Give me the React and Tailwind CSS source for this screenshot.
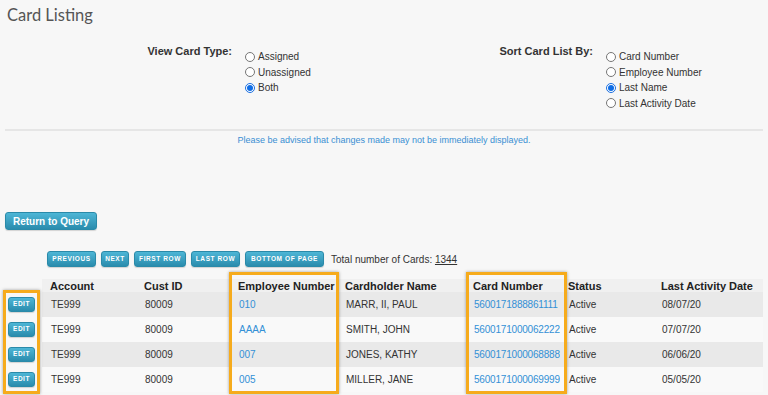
import React from "react";

const viewTypes = [
  { label: "Assigned", checked: false },
  { label: "Unassigned", checked: false },
  { label: "Both", checked: true },
];

const sortTypes = [
  { label: "Card Number", checked: false },
  { label: "Employee Number", checked: false },
  { label: "Last Name", checked: true },
  { label: "Last Activity Date", checked: false },
];

const pager = [
  { label: "PREVIOUS", w: "w-[49px]" },
  { label: "NEXT", w: "w-[28px]" },
  { label: "FIRST ROW", w: "w-[52px]" },
  { label: "LAST ROW", w: "w-[49px]" },
  { label: "BOTTOM OF PAGE", w: "w-[79px]" },
];

const cards = [
  { account: "TE999", cust: "80009", emp: "010", name: "MARR, II, PAUL", card: "5600171888861111", status: "Active", date: "08/07/20" },
  { account: "TE999", cust: "80009", emp: "AAAA", name: "SMITH, JOHN", card: "5600171000062222", status: "Active", date: "07/07/20" },
  { account: "TE999", cust: "80009", emp: "007", name: "JONES, KATHY", card: "5600171000068888", status: "Active", date: "06/06/20" },
  { account: "TE999", cust: "80009", emp: "005", name: "MILLER, JANE", card: "5600171000069999", status: "Active", date: "05/05/20" },
];

const headers = ["Account", "Cust ID", "Employee Number", "Cardholder Name", "Card Number", "Status", "Last Activity Date"];

const Radio = ({ label, checked }) => (
  <div className="flex items-center h-[15.5px] gap-[3px]">
    {checked ? (
      <span className="w-[10px] h-[10px] rounded-full border border-[#1a6fe0] bg-white flex items-center justify-center">
        <span className="w-[6px] h-[6px] rounded-full bg-[#0f6de6]" />
      </span>
    ) : (
      <span className="w-[10px] h-[10px] rounded-full border border-[#767676] bg-white" />
    )}
    <span>{label}</span>
  </div>
);

const TealButton = ({ children, className }) => (
  <button
    className={
      "rounded-[3px] border border-[#2a8aa9] bg-linear-to-b from-[#4db6d6] to-[#2a8cad] text-white font-bold shadow-[0_1px_1px_rgba(0,0,0,0.15)] " +
      className
    }
  >
    {children}
  </button>
);

export default function App() {
  return (
    <div className="relative w-[768px] h-[395px] overflow-hidden bg-[#f7f7f7] text-[#333] font-['Liberation_Sans',Arial,sans-serif]">
      <div className="h-[43px] pt-[3px] pl-[7px] font-['Lato',sans-serif] text-[16.5px] text-[#555]">Card Listing</div>

      <div className="h-[86px] flex text-[10px]">
        <div className="w-[232px] text-right text-[11px] font-bold leading-[15px] mt-[1px]">View Card Type:</div>
        <div className="w-[150px] ml-[13px] pt-[6px]">
          {viewTypes.map((r) => (
            <Radio key={r.label} {...r} />
          ))}
        </div>
        <div className="w-[198px] text-right text-[11px] font-bold leading-[15px] mt-[1px]">Sort Card List By:</div>
        <div className="ml-[13px] pt-[6px]">
          {sortTypes.map((r) => (
            <Radio key={r.label} {...r} />
          ))}
        </div>
      </div>

      <div className="mx-[5px] h-[2px] bg-[#e6e6e6]" />
      <div className="mt-[3px] h-[12px] leading-[12px] text-center text-[9px] text-[#3a8fd3]">
        Please be advised that changes made may not be immediately displayed.
      </div>

      <div className="mt-[66px] pl-[5px] h-[18px] flex">
        <TealButton className="w-[92px] h-[18px] text-[10px]">Return to Query</TealButton>
      </div>

      <div className="mt-[21px] pl-[47px] h-[16px] flex items-center gap-[5px]">
        {pager.map((p) => (
          <TealButton key={p.label} className={p.w + " h-[16px] text-[6.5px] tracking-[0.6px] leading-none"}>
            {p.label}
          </TealButton>
        ))}
        <span className="ml-[2px] text-[10px]">
          Total number of Cards: <span className="underline">1344</span>
        </span>
      </div>

      <div className="mt-[12px] grid grid-cols-[42px_94px_94px_107px_128px_95px_93px_110px]">
        <div />
        {headers.map((h) => (
          <div key={h} className="h-[13px] bg-[#f0f0f0] pl-[8px] text-[11px] font-bold leading-[14px] text-[#222] whitespace-nowrap">
            {h}
          </div>
        ))}
        {cards.map((c, i) => {
          const bg = i % 2 === 0 ? "bg-[#e9e9e9]" : "bg-[#f9f9f9]";
          const cell = "h-[25px] flex items-center pl-[9px] text-[10px] " + bg;
          return (
            <React.Fragment key={c.card}>
              <div className="h-[25px] flex items-center pl-[8px]">
                <TealButton className="w-[27px] h-[15px] text-[6.5px] tracking-[0.5px] leading-none">EDIT</TealButton>
              </div>
              <div className={cell}>{c.account}</div>
              <div className={cell}>{c.cust}</div>
              <div className={cell + " text-[#3390d6]"}>{c.emp}</div>
              <div className={cell}>{c.name}</div>
              <div className={cell + " text-[#3390d6] text-[9.5px] tracking-[-0.2px]"}>{c.card}</div>
              <div className={cell}>{c.status}</div>
              <div className={cell}>{c.date}</div>
            </React.Fragment>
          );
        })}
      </div>

      <div className="absolute left-[3px] top-[290px] w-[37px] h-[104px] border-[3px] border-[#f6ab1c] shadow-[0_0_3px_rgba(0,0,0,0.35)]" />
      <div className="absolute left-[229px] top-[272px] w-[110px] h-[122px] border-[3px] border-[#f6ab1c] shadow-[0_0_3px_rgba(0,0,0,0.35)]" />
      <div className="absolute left-[466px] top-[272px] w-[101px] h-[122px] border-[3px] border-[#f6ab1c] shadow-[0_0_3px_rgba(0,0,0,0.35)]" />
    </div>
  );
}
